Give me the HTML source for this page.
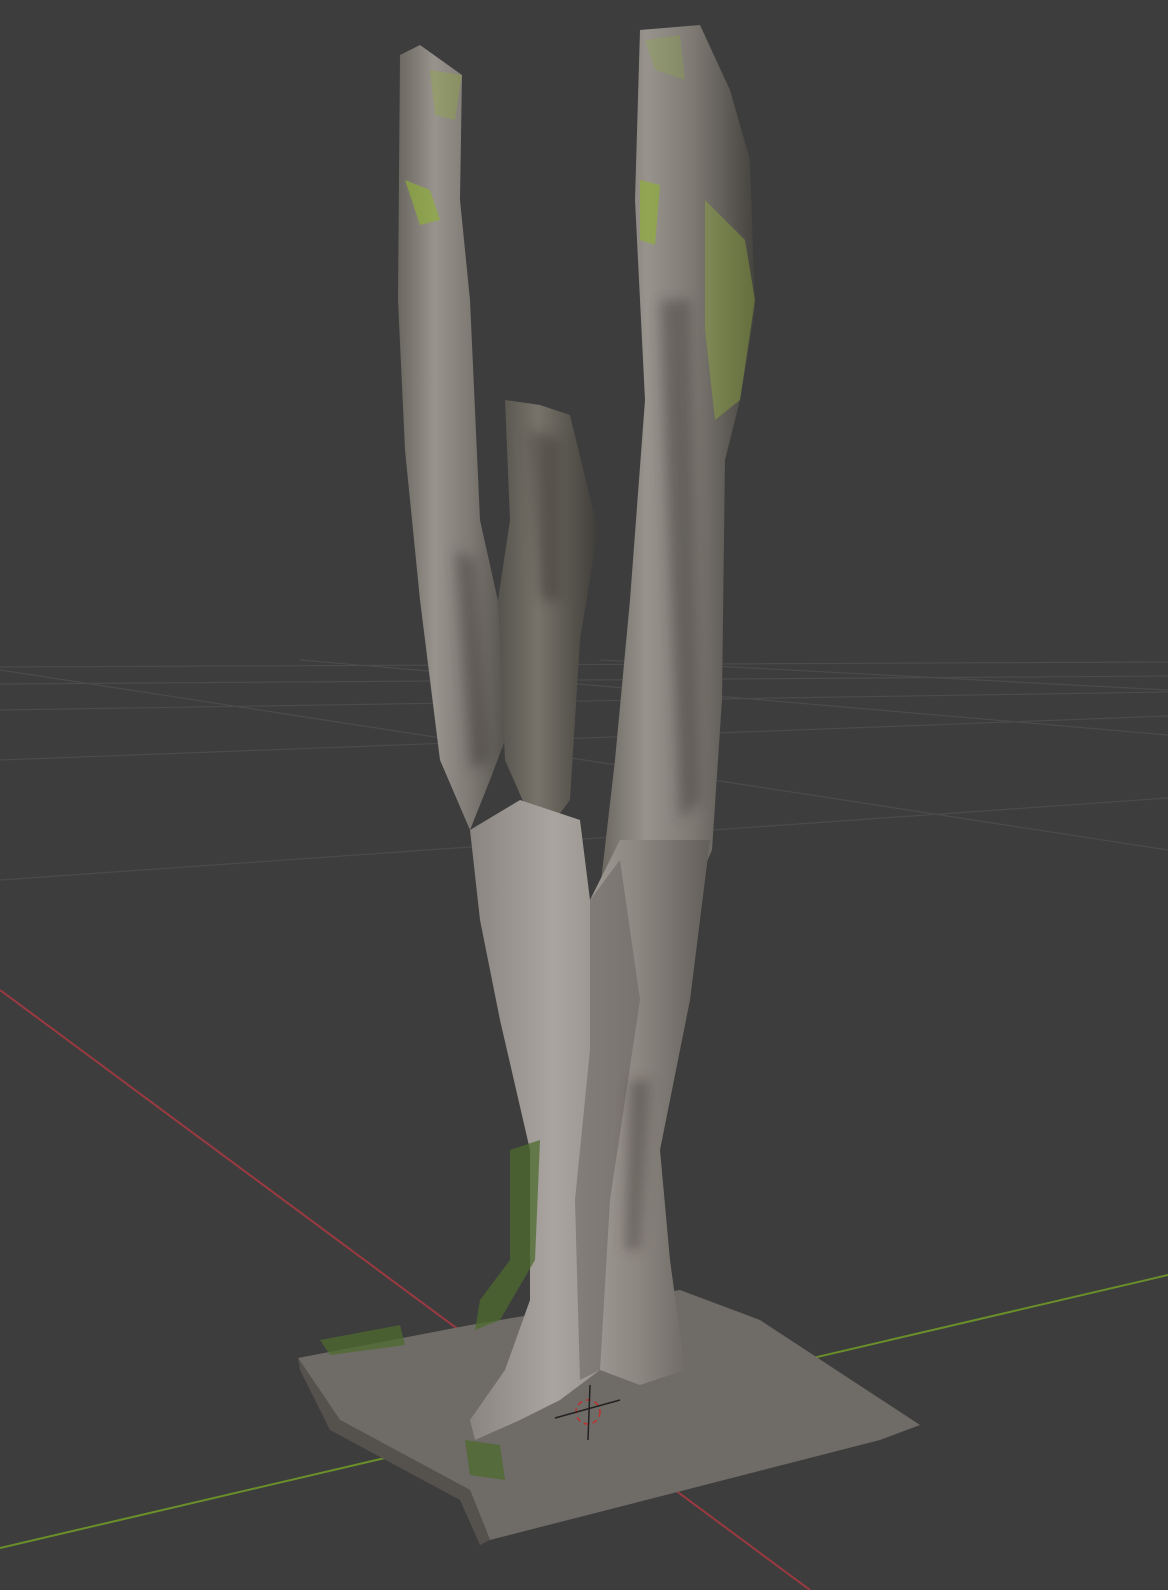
<!DOCTYPE html>
<html><head><style>html,body{margin:0;padding:0;background:#3d3d3d;}svg{display:block}</style></head>
<body>
<svg width="1168" height="1590" viewBox="0 0 1168 1590" xmlns="http://www.w3.org/2000/svg">
<defs>
<linearGradient id="bark" x1="0" x2="1" y1="0" y2="0">
<stop offset="0" stop-color="#6a6660"/><stop offset="0.3" stop-color="#98938d"/><stop offset="0.6" stop-color="#7e7973"/><stop offset="1" stop-color="#45433e"/></linearGradient>
<linearGradient id="bark2" x1="0" x2="1"><stop offset="0" stop-color="#55534d"/><stop offset="0.4" stop-color="#77736a"/><stop offset="1" stop-color="#3f3d38"/></linearGradient>
<linearGradient id="base" x1="0" x2="1"><stop offset="0" stop-color="#8a8580"/><stop offset="0.35" stop-color="#aaa5a0"/><stop offset="0.7" stop-color="#8d8781"/><stop offset="1" stop-color="#625e59"/></linearGradient>
<filter id="bl" x="-50%" y="-50%" width="200%" height="200%"><feGaussianBlur stdDeviation="6"/></filter>
</defs>
<rect width="1168" height="1590" fill="#3d3d3d"/>
<g stroke="#4b4b4b" stroke-width="1.2" fill="none">
<line x1="0" y1="667" x2="1168" y2="662"/>
<line x1="0" y1="684" x2="1168" y2="676"/>
<line x1="0" y1="710" x2="1168" y2="692"/>
<line x1="0" y1="760" x2="1168" y2="716"/>
<line x1="0" y1="880" x2="1168" y2="798"/>
<line x1="0" y1="670" x2="1168" y2="850"/>
<line x1="300" y1="660" x2="1168" y2="735"/>
<line x1="600" y1="660" x2="1168" y2="690"/>
</g>
<line x1="0" y1="990" x2="810" y2="1590" stroke="#9a3a40" stroke-width="2"/>
<line x1="0" y1="1548" x2="1168" y2="1275" stroke="#6a8f2a" stroke-width="2"/>
<polygon points="298,1358 470,1325 680,1290 760,1320 920,1425 880,1440 490,1540 470,1490 340,1420" fill="#6f6b67"/>
<polygon points="298,1358 340,1420 470,1490 490,1540 480,1545 460,1500 330,1430 300,1370" fill="#55524e"/>
<path d="M400,55 L420,45 L462,75 L460,200 L470,300 L480,520 L520,700 L490,780 L470,830 L440,760 L420,600 L405,450 L398,300 Z" fill="url(#bark)"/>
<path d="M505,400 L540,405 L570,415 L598,530 L580,640 L570,800 L540,840 L505,760 L498,600 L510,520 Z" fill="url(#bark2)"/>
<path d="M640,30 L700,25 L730,90 L750,160 L755,310 L740,400 L725,460 L722,700 L712,850 L690,900 L600,890 L615,760 L630,600 L645,400 L635,200 Z" fill="url(#bark)"/>
<path d="M470,830 L520,800 L580,820 L590,900 L620,840 L710,840 L690,1000 L660,1150 L670,1260 L685,1370 L640,1385 L600,1370 L560,1400 L520,1420 L475,1440 L470,1420 L505,1370 L530,1300 L530,1150 L500,1020 L480,920 Z" fill="url(#base)"/>
<path d="M590,900 L620,860 L640,1000 L610,1200 L600,1370 L580,1380 L575,1200 L590,1050 Z" fill="#6a6560" opacity="0.55"/>
<g fill="#2e2c28" opacity="0.35" filter="url(#bl)">
<path d="M660,300 L690,300 L700,800 L680,820 Z"/>
<path d="M455,550 L475,560 L490,760 L470,770 Z"/>
<path d="M530,430 L560,440 L560,600 L540,600 Z"/>
<path d="M630,1080 L650,1080 L640,1250 L625,1250 Z"/>
</g>
<g fill="#8fae3c" opacity="0.7">
<path d="M405,180 L430,190 L440,220 L420,225 Z"/>
<path d="M640,180 L660,185 L655,245 L640,240 Z"/>
<path d="M705,200 L745,240 L755,300 L740,400 L715,420 L705,330 Z" opacity="0.6"/>
<path d="M430,70 L462,75 L455,120 L435,115 Z" opacity="0.5"/>
<path d="M645,40 L680,35 L685,80 L655,70 Z" opacity="0.4"/>
</g>
<g fill="#4d6b2e" opacity="0.75">
<path d="M510,1150 L540,1140 L535,1260 L500,1320 L475,1330 L480,1300 L510,1260 Z"/>
<path d="M320,1340 L400,1325 L405,1345 L330,1355 Z"/>
<path d="M465,1440 L500,1445 L505,1480 L470,1475 Z"/>
</g>
<g stroke="#222" stroke-width="1.5" fill="none">
<circle cx="588" cy="1412" r="12" stroke="#c03030" stroke-dasharray="5 4"/>
<line x1="555" y1="1418" x2="620" y2="1400"/>
<line x1="590" y1="1385" x2="588" y2="1440"/>
</g>
</svg>
</body></html>
